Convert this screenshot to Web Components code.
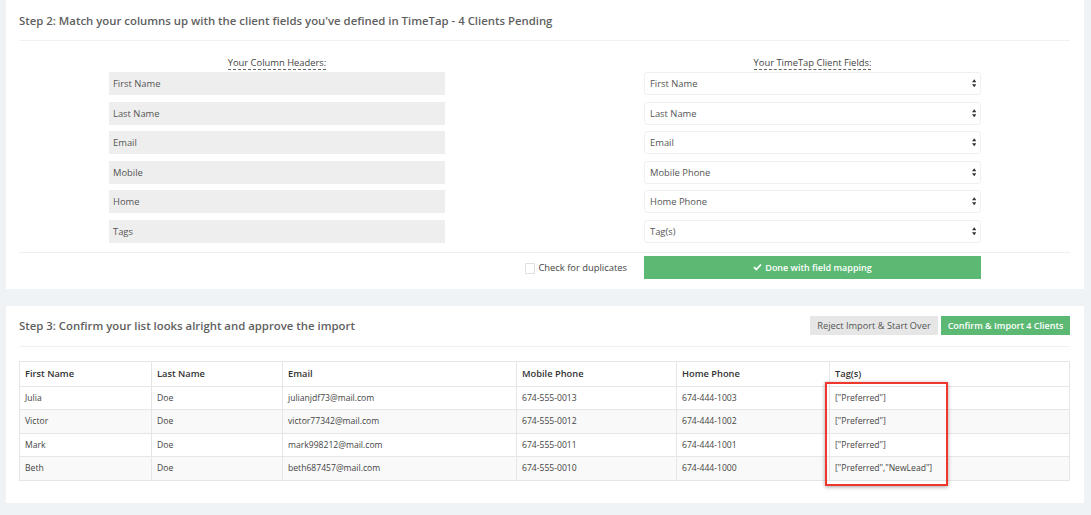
<!DOCTYPE html>
<html>
<head>
<meta charset="utf-8">
<title>Import clients</title>
<style>
  html, body { margin: 0; padding: 0; }
  body {
    background: #eff3f6;
    font-family: "Open Sans", "Liberation Sans", sans-serif;
    color: #555;
    height: 515px;
    overflow: hidden;
  }
</style>
</head>
<body>

<tt-panel heading="Step 2: Match your columns up with the client fields you've defined in TimeTap - 4 Clients Pending">
  <tt-mapping>
    <tt-map-row column="First Name" field="First Name"></tt-map-row>
    <tt-map-row column="Last Name" field="Last Name"></tt-map-row>
    <tt-map-row column="Email" field="Email"></tt-map-row>
    <tt-map-row column="Mobile" field="Mobile Phone"></tt-map-row>
    <tt-map-row column="Home" field="Home Phone"></tt-map-row>
    <tt-map-row column="Tags" field="Tag(s)"></tt-map-row>
  </tt-mapping>
</tt-panel>

<tt-panel class="second" heading="Step 3: Confirm your list looks alright and approve the import">
  <tt-button slot="actions" kind="grey">Reject Import &amp; Start Over</tt-button>
  <tt-button slot="actions" kind="green">Confirm &amp; Import 4 Clients</tt-button>
  <tt-client-table></tt-client-table>
</tt-panel>

<script>
class TtPanel extends HTMLElement {
  connectedCallback() {
    this.attachShadow({ mode: 'open' });
    this.shadowRoot.innerHTML = `
      <style>
        :host {
          display: block;
          background: #fff;
          margin: 0 7px 0 6px;
          padding: 0 14px 0 13px;
        }
        :host(.second) { margin-top: 17px; }
        .head {
          display: flex;
          justify-content: space-between;
          align-items: center;
          height: 40px;
          border-bottom: 1px solid #f1f1f1;
        }
        h2 {
          margin: 0;
          font-size: 11.36px;
          font-weight: 600;
          color: #5f5f5f;
        }
        .actions { display: flex; gap: 3px; }
      </style>
      <div class="head">
        <h2>${this.getAttribute('heading')}</h2>
        <div class="actions"><slot name="actions"></slot></div>
      </div>
      <slot></slot>
    `;
  }
}

class TtMapping extends HTMLElement {
  connectedCallback() {
    this.attachShadow({ mode: 'open' });
    this.shadowRoot.innerHTML = `
      <style>
        :host { display: block; }
        .titles {
          display: grid;
          grid-template-columns: 336px 337px;
          column-gap: 199px;
          padding-left: 90px;
          padding-top: 16px;
          height: 15px;
          font-size: 9.4px;
          color: #444;
          text-align: center;
        }
        .titles span { border-bottom: 1px dashed #666; line-height: 11px; }
        .titles div { line-height: 0; }
        .rows { display: grid; row-gap: 6.5px; padding-bottom: 9px; border-bottom: 1px solid #eee; }
        .foot {
          display: flex;
          justify-content: flex-end;
          align-items: center;
          padding: 3px 89px 10px 0;
        }
        label {
          display: flex;
          align-items: center;
          gap: 3px;
          margin-right: 17px;
          font-size: 9.4px;
          color: #444;
        }
        .box {
          width: 8px;
          height: 9px;
          margin-top: 2px;
          border: 1px solid #e0e0e0;
          border-radius: 1px;
        }
        tt-button { width: 337px; }
      </style>
      <div class="titles">
        <div><span>Your Column Headers:</span></div>
        <div><span>Your TimeTap Client Fields:</span></div>
      </div>
      <div class="rows"><slot></slot></div>
      <div class="foot">
        <label><span class="box"></span>Check for duplicates</label>
        <tt-button kind="wide">
          <svg width="9" height="8" viewBox="0 0 9 8" style="margin-right:3px"><path d="M1 4.2 3.3 6.5 8 1.5" fill="none" stroke="#fff" stroke-width="1.8"/></svg>Done with field mapping
        </tt-button>
      </div>
    `;
  }
}

class TtMapRow extends HTMLElement {
  connectedCallback() {
    this.attachShadow({ mode: 'open' });
    this.shadowRoot.innerHTML = `
      <style>
        :host {
          display: grid;
          grid-template-columns: 336px 337px;
          column-gap: 199px;
          padding-left: 90px;
          font-size: 9.4px;
          color: #555;
        }
        .cell {
          height: 23px;
          line-height: 23px;
          box-sizing: border-box;
        }
        .column { background: #eee; padding-left: 4px; }
        .field {
          display: flex;
          justify-content: space-between;
          align-items: center;
          border: 1px solid #f0f0f0;
          border-radius: 3px;
          padding: 0 4px 0 5px;
        }
      </style>
      <div class="cell column">${this.getAttribute('column')}</div>
      <div class="cell field">
        <span>${this.getAttribute('field')}</span>
        <svg width="4.5" height="8.5" viewBox="0 0 5 9"><path d="M2.5 0 5 3.5H0zM0 5.5h5L2.5 9z" fill="#333"/></svg>
      </div>
    `;
  }
}

class TtButton extends HTMLElement {
  connectedCallback() {
    this.attachShadow({ mode: 'open' });
    this.shadowRoot.innerHTML = `
      <style>
        :host {
          display: flex;
          align-items: center;
          justify-content: center;
          height: 18.5px;
          padding: 0 6px;
          font-size: 9px;
          font-weight: 600;
          white-space: nowrap;
        }
        :host([kind="grey"]) { background: #e6e6e6; color: #555; font-weight: 400; font-size: 9.25px; width: 116px; }
        :host([kind="green"]) { background: #5cb974; color: #fff; width: 117px; }
        :host([kind="wide"]) { background: #5cb974; color: #fff; height: 23px; padding: 0; }
      </style>
      <slot></slot>
    `;
  }
}

class TtClientTable extends HTMLElement {
  connectedCallback() {
    const heads = ['First Name', 'Last Name', 'Email', 'Mobile Phone', 'Home Phone', 'Tag(s)'];
    const rows = [
      ['Julia', 'Doe', 'julianjdf73@mail.com', '674-555-0013', '674-444-1003', '["Preferred"]'],
      ['Victor', 'Doe', 'victor77342@mail.com', '674-555-0012', '674-444-1002', '["Preferred"]'],
      ['Mark', 'Doe', 'mark998212@mail.com', '674-555-0011', '674-444-1001', '["Preferred"]'],
      ['Beth', 'Doe', 'beth687457@mail.com', '674-555-0010', '674-444-1000', '["Preferred","NewLead"]']
    ];
    this.attachShadow({ mode: 'open' });
    this.shadowRoot.innerHTML = `
      <style>
        :host { display: block; position: relative; padding: 14px 0 22px; }
        table {
          width: 100%;
          table-layout: fixed;
          border-collapse: collapse;
          font-size: 8.6px;
          color: #444;
        }
        th, td {
          border: 1px solid #e6e6e6;
          padding: 0 0 0 5px;
          text-align: left;
        }
        th { height: 24px; font-size: 9.3px; font-weight: 600; color: #333; }
        td { height: 22.5px; }
        tbody tr:nth-child(odd) { background: #fff; }
        tbody tr:nth-child(even) { background: #f9f9f9; }
        .mark {
          position: absolute;
          left: 806px;
          top: 35px;
          width: 119px;
          height: 100px;
          border: 2px solid #f0372e;
          box-shadow: 0 1px 4px rgba(0, 0, 0, .35);
          pointer-events: none;
        }
      </style>
      <table>
        <colgroup>
          <col style="width:132px"><col style="width:131px"><col style="width:234px">
          <col style="width:160px"><col style="width:153px"><col>
        </colgroup>
        <thead><tr>${heads.map(h => `<th>${h}</th>`).join('')}</tr></thead>
        <tbody>
          ${rows.map(r => `<tr>${r.map(c => `<td>${c}</td>`).join('')}</tr>`).join('')}
        </tbody>
      </table>
      <div class="mark"></div>
    `;
  }
}

customElements.define('tt-panel', TtPanel);
customElements.define('tt-mapping', TtMapping);
customElements.define('tt-map-row', TtMapRow);
customElements.define('tt-button', TtButton);
customElements.define('tt-client-table', TtClientTable);
</script>
</body>
</html>
